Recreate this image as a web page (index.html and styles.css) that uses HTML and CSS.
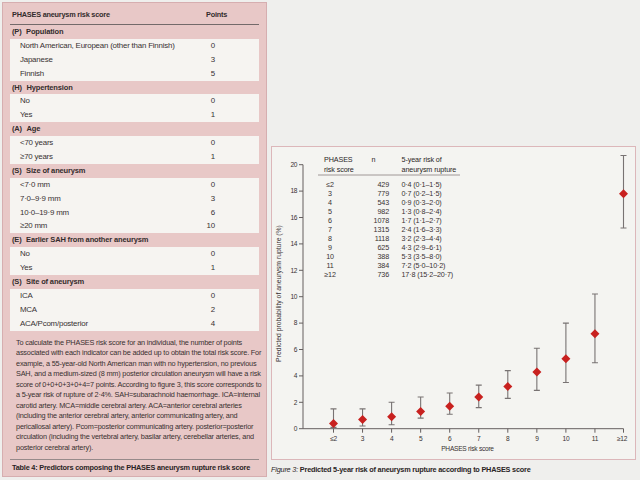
FILE: index.html
```html
<!DOCTYPE html>
<html lang="en">
<head>
<meta charset="utf-8">
<title>PHASES aneurysm risk score</title>
<link rel="stylesheet" href="styles.css">
</head>
<body>
<div class="page">
  <section class="table-panel">
    <div class="thead"><span class="lab">PHASES aneurysm risk score</span><span class="pts">Points</span></div>

    <div class="cat">(P)<span class="sp"></span>Population</div>
    <div class="group">
      <div class="row"><span class="lab">North American, European (other than Finnish)</span><span class="pts">0</span></div>
      <div class="row"><span class="lab">Japanese</span><span class="pts">3</span></div>
      <div class="row"><span class="lab">Finnish</span><span class="pts">5</span></div>
    </div>

    <div class="cat">(H)<span class="sp"></span>Hypertension</div>
    <div class="group">
      <div class="row"><span class="lab">No</span><span class="pts">0</span></div>
      <div class="row"><span class="lab">Yes</span><span class="pts">1</span></div>
    </div>

    <div class="cat">(A)<span class="sp"></span>Age</div>
    <div class="group">
      <div class="row"><span class="lab">&lt;70 years</span><span class="pts">0</span></div>
      <div class="row"><span class="lab">≥70 years</span><span class="pts">1</span></div>
    </div>

    <div class="cat">(S)<span class="sp"></span>Size of aneurysm</div>
    <div class="group">
      <div class="row"><span class="lab">&lt;7·0 mm</span><span class="pts">0</span></div>
      <div class="row"><span class="lab">7·0–9·9 mm</span><span class="pts">3</span></div>
      <div class="row"><span class="lab">10·0–19·9 mm</span><span class="pts">6</span></div>
      <div class="row"><span class="lab">≥20 mm</span><span class="pts">10</span></div>
    </div>

    <div class="cat">(E)<span class="sp"></span>Earlier SAH from another aneurysm</div>
    <div class="group">
      <div class="row"><span class="lab">No</span><span class="pts">0</span></div>
      <div class="row"><span class="lab">Yes</span><span class="pts">1</span></div>
    </div>

    <div class="cat">(S)<span class="sp"></span>Site of aneurysm</div>
    <div class="group">
      <div class="row"><span class="lab">ICA</span><span class="pts">0</span></div>
      <div class="row"><span class="lab">MCA</span><span class="pts">2</span></div>
      <div class="row"><span class="lab">ACA/Pcom/posterior</span><span class="pts">4</span></div>
    </div>

    <p class="note">To calculate the PHASES risk score for an individual, the number of points<br>associated with each indicator can be added up to obtain the total risk score. For<br>example, a 55-year-old North American man with no hypertension, no previous<br>SAH, and a medium-sized (8 mm) posterior circulation aneurysm will have a risk<br>score of 0+0+0+3+0+4=7 points. According to figure 3, this score corresponds to<br>a 5-year risk of rupture of 2·4%. SAH=subarachnoid haemorrhage. ICA=internal<br>carotid artery. MCA=middle cerebral artery. ACA=anterior cerebral arteries<br>(including the anterior cerebral artery, anterior communicating artery, and<br>pericallosal artery). Pcom=posterior communicating artery. posterior=posterior<br>circulation (including the vertebral artery, basilar artery, cerebellar arteries, and<br>posterior cerebral artery).</p>

    <div class="caption">Table 4: Predictors composing the PHASES aneurysm rupture risk score</div>
  </section>

  <section class="figure">
    <div class="chart-panel">
      <svg class="chart" viewBox="272 147 363 312" width="363" height="312" xmlns="http://www.w3.org/2000/svg">
        <defs>
          <path id="dia" d="M0 -4.5L4.5 0 0 4.5 -4.5 0Z"/>
        </defs>
        <path class="axis" d="M303 164.7V428.7H623.5"/>
        <path class="axis" d="M299 428.7h4M299 402.3h4M299 375.9h4M299 349.5h4M299 323.1h4M299 296.7h4M299 270.3h4M299 243.9h4M299 217.5h4M299 191.1h4M299 164.7h4"/>
        <path class="axis" d="M333.5 428.7v4M362.55 428.7v4M391.6 428.7v4M420.65 428.7v4M449.7 428.7v4M478.75 428.7v4M507.8 428.7v4M536.85 428.7v4M565.9 428.7v4M594.95 428.7v4M623.5 428.7v4"/>
        <g class="ylab">
          <text x="297" y="431">0</text>
          <text x="297" y="404.6">2</text>
          <text x="297" y="378.2">4</text>
          <text x="297" y="351.8">6</text>
          <text x="297" y="325.4">8</text>
          <text x="297" y="299">10</text>
          <text x="297" y="272.6">12</text>
          <text x="297" y="246.2">14</text>
          <text x="297" y="219.8">16</text>
          <text x="297" y="193.4">18</text>
          <text x="297" y="167">20</text>
        </g>
        <g class="xlab">
          <text x="333.5" y="441">≤2</text>
          <text x="362.55" y="441">3</text>
          <text x="391.6" y="441">4</text>
          <text x="420.65" y="441">5</text>
          <text x="449.7" y="441">6</text>
          <text x="478.75" y="441">7</text>
          <text x="507.8" y="441">8</text>
          <text x="536.85" y="441">9</text>
          <text x="565.9" y="441">10</text>
          <text x="594.95" y="441">11</text>
          <text x="622" y="441">≥12</text>
        </g>
        <text class="xtitle" x="467.5" y="450.5">PHASES risk score</text>
        <text class="ytitle" transform="translate(280.5 293.5) rotate(-90)">Predicted probability of aneurysm rupture (%)</text>

        <path class="err" d="M333.5 427.38V408.9M330.5 408.9h6M330.5 427.38h6
          M362.55 426.06V408.9M359.55 408.9h6M359.55 426.06h6
          M391.6 424.74V402.3M388.6 402.3h6M388.6 424.74h6
          M420.65 418.14V397.02M417.65 397.02h6M417.65 418.14h6
          M449.7 414.18V393.06M446.7 393.06h6M446.7 414.18h6
          M478.75 407.58V385.14M475.75 385.14h6M475.75 407.58h6
          M507.8 398.34V370.62M504.8 370.62h6M504.8 398.34h6
          M536.85 390.42V348.18M533.85 348.18h6M533.85 390.42h6
          M565.9 382.5V323.1M562.9 323.1h6M562.9 382.5h6
          M594.95 362.7V294.06M591.95 294.06h6M591.95 362.7h6
          M623.5 228.06V155.46M620.5 155.46h6M620.5 228.06h6"/>
        <g class="pt">
          <use href="#dia" x="333.5" y="423.42"/>
          <use href="#dia" x="362.55" y="419.46"/>
          <use href="#dia" x="391.6" y="416.82"/>
          <use href="#dia" x="420.65" y="411.54"/>
          <use href="#dia" x="449.7" y="406.26"/>
          <use href="#dia" x="478.75" y="397.02"/>
          <use href="#dia" x="507.8" y="386.46"/>
          <use href="#dia" x="536.85" y="371.94"/>
          <use href="#dia" x="565.9" y="358.74"/>
          <use href="#dia" x="594.95" y="333.66"/>
          <use href="#dia" x="623.5" y="193.74"/>
        </g>

        <g class="tbh">
          <text x="324" y="161.5">PHASES</text>
          <text x="324" y="171.5">risk score</text>
          <text x="371.5" y="161.5">n</text>
          <text x="401.5" y="161.5">5-year risk of</text>
          <text x="401.5" y="171.5">aneurysm rupture</text>
        </g>
        <path class="rule" d="M318 175H460"/>
        <g class="tb score">
          <text x="330" y="186.8">≤2</text>
          <text x="330" y="195.8">3</text>
          <text x="330" y="204.8">4</text>
          <text x="330" y="213.8">5</text>
          <text x="330" y="222.8">6</text>
          <text x="330" y="231.8">7</text>
          <text x="330" y="240.8">8</text>
          <text x="330" y="249.8">9</text>
          <text x="330" y="258.8">10</text>
          <text x="330" y="267.8">11</text>
          <text x="330" y="276.8">≥12</text>
        </g>
        <g class="tb num">
          <text x="389" y="186.8">429</text>
          <text x="389" y="195.8">779</text>
          <text x="389" y="204.8">543</text>
          <text x="389" y="213.8">982</text>
          <text x="389" y="222.8">1078</text>
          <text x="389" y="231.8">1315</text>
          <text x="389" y="240.8">1118</text>
          <text x="389" y="249.8">625</text>
          <text x="389" y="258.8">388</text>
          <text x="389" y="267.8">384</text>
          <text x="389" y="276.8">736</text>
        </g>
        <g class="tb risk">
          <text x="401.5" y="186.8">0·4 (0·1–1·5)</text>
          <text x="401.5" y="195.8">0·7 (0·2–1·5)</text>
          <text x="401.5" y="204.8">0·9 (0·3–2·0)</text>
          <text x="401.5" y="213.8">1·3 (0·8–2·4)</text>
          <text x="401.5" y="222.8">1·7 (1·1–2·7)</text>
          <text x="401.5" y="231.8">2·4 (1·6–3·3)</text>
          <text x="401.5" y="240.8">3·2 (2·3–4·4)</text>
          <text x="401.5" y="249.8">4·3 (2·9–6·1)</text>
          <text x="401.5" y="258.8">5·3 (3·5–8·0)</text>
          <text x="401.5" y="267.8">7·2 (5·0–10·2)</text>
          <text x="401.5" y="276.8">17·8 (15·2–20·7)</text>
        </g>
      </svg>
    </div>
    <div class="fig-caption"><i>Figure 3:</i> Predicted 5-year risk of aneurysm rupture according to PHASES score</div>
  </section>
</div>
</body>
</html>
```

FILE: styles.css
```css
html, body {
  margin: 0;
  padding: 0;
}

body {
  width: 640px;
  height: 480px;
  background: #efefed;
  color: #2a2626;
  font-family: "Liberation Sans", Arial, sans-serif;
  overflow: hidden;
}

.page {
  display: flex;
  align-items: flex-start;
  padding: 2px 0 0 2px;
}

/* ---------- Left: Table 4 ---------- */
.table-panel {
  box-sizing: border-box;
  width: 265px;
  height: 475px;
  background: #e8c8c7;
  border: 1px solid #d6aeb0;
  padding: 0 7px;
  display: flex;
  flex-direction: column;
}

.thead {
  display: flex;
  padding-top: 4px;
  height: 17px;
  line-height: 16px;
  border-bottom: 1px solid #736a6a;
  font-size: 7.3px;
  letter-spacing: -0.2px;
  font-weight: 700;
  color: #332c2c;
}

.thead .lab {
  flex: 1;
  padding-left: 2px;
}

.thead .pts {
  width: 53px;
}

.cat {
  height: 13.9px;
  line-height: 13.9px;
  padding-left: 2px;
  font-size: 7.5px;
  letter-spacing: -0.15px;
  font-weight: 700;
  color: #332c2c;
}

.cat .sp {
  display: inline-block;
  width: 4.5px;
}

.group {
  background: #f6f4f1;
}

.row {
  display: flex;
  height: 13.9px;
  line-height: 13.9px;
  font-size: 7.9px;
  letter-spacing: -0.2px;
  color: #383131;
}

.row .lab {
  flex: 1;
  padding-left: 10px;
}

.row .pts {
  width: 12px;
  margin-right: 44px;
  text-align: right;
}

.note {
  margin: 7px 0 0;
  padding-left: 6px;
  font-size: 7.3px;
  letter-spacing: -0.18px;
  line-height: 10.5px;
  white-space: nowrap;
  color: #383131;
}

.caption {
  margin-top: 5.5px;
  border-top: 1px solid #968a8a;
  padding: 2px 0 0 2px;
  font-size: 7.3px;
  line-height: 12px;
  letter-spacing: -0.2px;
  font-weight: 700;
  white-space: nowrap;
  color: #2a2424;
}

/* ---------- Right: Figure 3 ---------- */
.figure {
  margin-left: 4px;
  padding-top: 144px;
  width: 365px;
}

.chart-panel {
  width: 363px;
  height: 312px;
  border: 1px solid #dcb7ba;
  background: #f4f4f1;
}

.chart {
  display: block;
  font-family: "Liberation Sans", Arial, sans-serif;
}

.axis {
  fill: none;
  stroke: #655f5f;
  stroke-width: 1;
}

.err {
  fill: none;
  stroke: #787373;
  stroke-width: 1.1;
}

.pt use {
  fill: #c8211f;
}

.rule {
  stroke: #8a8282;
  stroke-width: 0.8;
}

.ylab text {
  font-size: 6.6px;
  letter-spacing: -0.4px;
  text-anchor: end;
  fill: #383131;
}

.xlab text {
  font-size: 6.6px;
  letter-spacing: -0.3px;
  text-anchor: middle;
  fill: #383131;
}

.xtitle {
  font-size: 6.6px;
  letter-spacing: -0.25px;
  text-anchor: middle;
  fill: #383131;
}

.ytitle {
  font-size: 6.8px;
  text-anchor: middle;
  fill: #383131;
}

.tbh text {
  font-size: 7.2px;
  letter-spacing: -0.1px;
  fill: #2a2626;
}

.tb text {
  font-size: 7.2px;
  letter-spacing: -0.15px;
  fill: #383131;
}

.tb.score text {
  text-anchor: middle;
}

.tb.num text {
  text-anchor: end;
}

.fig-caption {
  margin-top: 5px;
  font-size: 7.3px;
  letter-spacing: -0.2px;
  font-weight: 700;
  white-space: nowrap;
  color: #2a2424;
}

.fig-caption i {
  font-weight: 400;
}
```
